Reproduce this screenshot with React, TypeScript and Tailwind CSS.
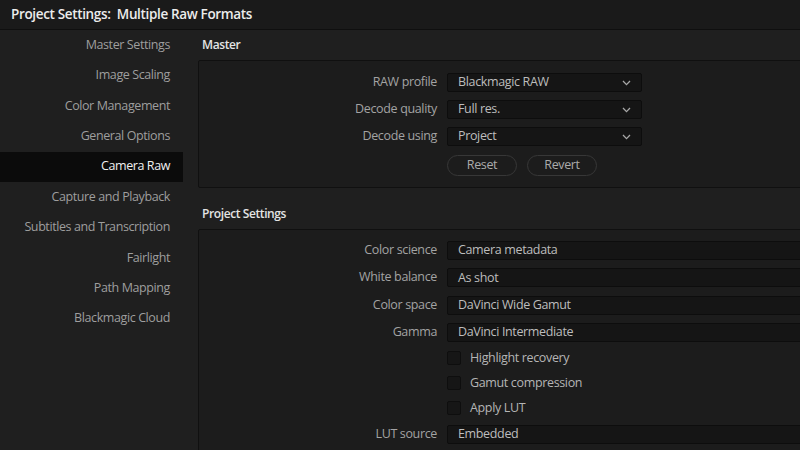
import React from "react";

const sidebar = [
  "Master Settings",
  "Image Scaling",
  "Color Management",
  "General Options",
  "Camera Raw",
  "Capture and Playback",
  "Subtitles and Transcription",
  "Fairlight",
  "Path Mapping",
  "Blackmagic Cloud",
];

function Chevron() {
  return (
    <svg width="9" height="6" viewBox="0 0 9 6" className="shrink-0">
      <path d="M1 1 L4.5 4.6 L8 1" fill="none" stroke="#a8a8a8" strokeWidth="1.3" />
    </svg>
  );
}

function Row({ label, children }: { label: string; children: React.ReactNode }) {
  return (
    <div className="flex items-center">
      <div className="w-[248px] shrink-0 pr-[10px] text-right text-[12.5px] tracking-[-0.35px] text-[#a3a3a3]">
        {label}
      </div>
      {children}
    </div>
  );
}

function Select({ value, chevron, wide }: { value: string; chevron?: boolean; wide?: boolean }) {
  return (
    <div
      className={
        "flex h-[19px] items-center justify-between rounded-[2px] border border-[#0d0d0d] bg-[#151515] pl-[10px] pr-[10px] text-[12.5px] tracking-[-0.35px] text-[#bdbdbd] " +
        (wide ? "w-[420px]" : "w-[195px]")
      }
    >
      <span className="leading-none">{value}</span>
      {chevron && <Chevron />}
    </div>
  );
}

function Check({ label }: { label: string }) {
  return (
    <div className="flex h-[25px] items-center pl-[248px]">
      <div className="h-[14px] w-[14px] rounded-[2px] border border-[#0e0e0e] bg-[#161616]" />
      <span className="ml-[9px] text-[12.5px] tracking-[-0.35px] text-[#b5b5b5]">{label}</span>
    </div>
  );
}

function Pill({ children }: { children: React.ReactNode }) {
  return (
    <div className="flex h-[21px] w-[70px] items-center justify-center rounded-full border border-[#373737] text-[12.5px] tracking-[-0.35px] text-[#ababab]">
      {children}
    </div>
  );
}

export default function App() {
  return (
    <div
      className="h-[450px] w-[800px] overflow-hidden bg-[#1f1f1f]"
      style={{ fontFamily: '"Open Sans", "Noto Sans", sans-serif' }}
    >
      <div className="flex h-[30px] items-center border-b border-[#0f0f0f] bg-[#1a1a1a] pl-[11px] text-[13.5px] font-semibold tracking-[-0.35px] text-[#ececec]">
        Project Settings:&nbsp; Multiple Raw Formats
      </div>
      <div className="flex">
        <div className="w-[183px] shrink-0">
          {sidebar.map((s) => (
            <div
              key={s}
              className={
                "flex h-[30.4px] items-center justify-end pr-[13px] text-[12.5px] tracking-[-0.4px] " +
                (s === "Camera Raw" ? "bg-[#0b0b0b] text-[#f0f0f0]" : "text-[#9e9e9e]")
              }
            >
              {s}
            </div>
          ))}
        </div>
        <div className="w-[640px] shrink-0 pl-[15px]">
          <div className="flex h-[30px] items-center pl-[4px] text-[12px] font-semibold tracking-[-0.4px] text-[#e4e4e4]">
            Master
          </div>
          <div className="flex h-[128px] flex-col gap-[8px] rounded-[2px] border border-[#101010] bg-[#1c1c1c] pt-[12px]">
            <Row label="RAW profile">
              <Select value="Blackmagic RAW" chevron />
            </Row>
            <Row label="Decode quality">
              <Select value="Full res." chevron />
            </Row>
            <Row label="Decode using">
              <Select value="Project" chevron />
            </Row>
            <div className="mt-[1px] flex gap-[10px] pl-[248px]">
              <Pill>Reset</Pill>
              <Pill>Revert</Pill>
            </div>
          </div>
          <div className="mt-[10px] flex h-[31px] items-center pl-[4px] text-[12px] font-semibold tracking-[-0.4px] text-[#e4e4e4]">
            Project Settings
          </div>
          <div className="flex h-[240px] flex-col rounded-[2px] border border-[#101010] bg-[#1c1c1c] pt-[11px]">
            <div className="flex flex-col gap-[8.3px]">
              <Row label="Color science">
                <Select value="Camera metadata" wide />
              </Row>
              <Row label="White balance">
                <Select value="As shot" wide />
              </Row>
              <Row label="Color space">
                <Select value="DaVinci Wide Gamut" wide />
              </Row>
              <Row label="Gamma">
                <Select value="DaVinci Intermediate" wide />
              </Row>
            </div>
            <div className="mt-[4px] flex flex-col">
              <Check label="Highlight recovery" />
              <Check label="Gamut compression" />
              <Check label="Apply LUT" />
            </div>
            <div className="mt-[4px]">
              <Row label="LUT source">
                <Select value="Embedded" wide />
              </Row>
            </div>
          </div>
        </div>
      </div>
    </div>
  );
}
